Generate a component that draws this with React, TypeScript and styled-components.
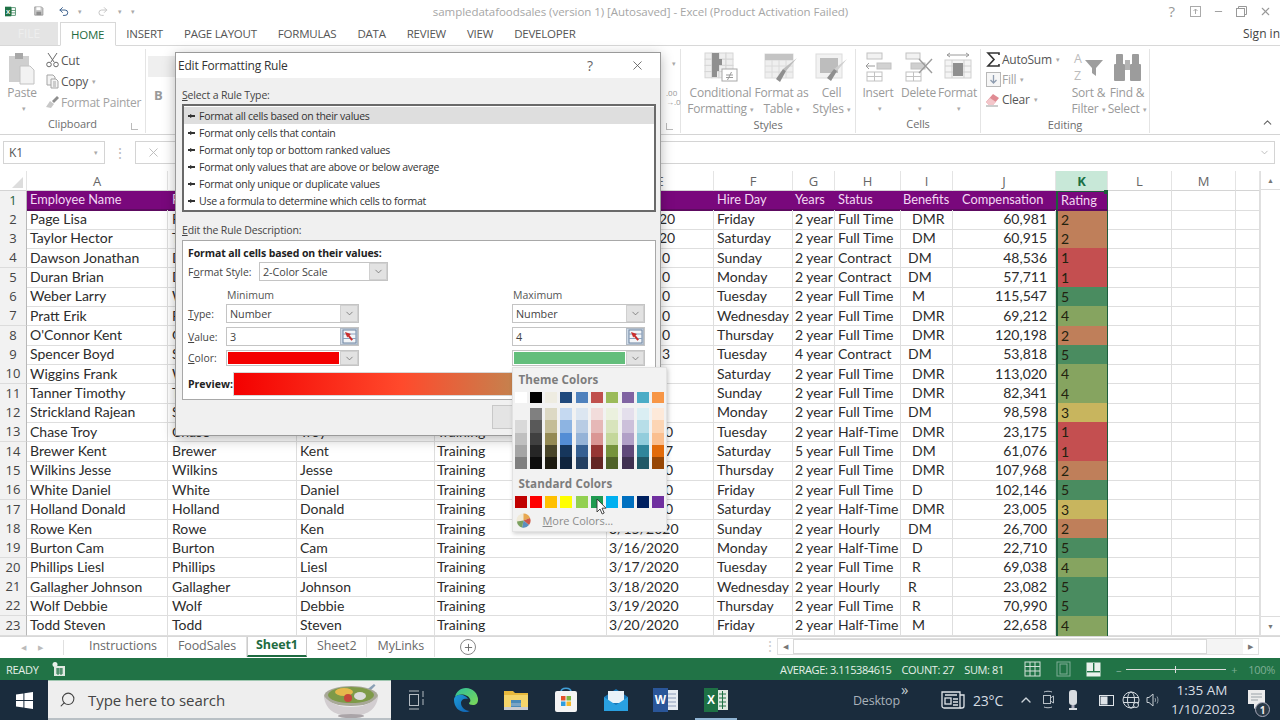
import React from "react";
import styled, { createGlobalStyle } from "styled-components";
import { Undo2, Redo2, ChevronUp, ChevronDown, Search, Plus, Minus, X } from "lucide-react";

const UI = `"Open Sans", "Noto Sans", "Liberation Sans", sans-serif`;
const CELL = `Lato, "Open Sans", "Liberation Sans", sans-serif`;

const Global = createGlobalStyle`
  html, body { margin: 0; padding: 0; background: #fff; }
  #root { width: 1280px; height: 720px; overflow: hidden; }
  * { box-sizing: border-box; }
`;

const Page = styled.div`
  position: relative; width: 1280px; height: 720px; display: flex; flex-direction: column;
  overflow: hidden; font-family: ${UI}; color: #444; background: #fff;
`;
const Spacer = styled.span<{ $w: number }>`
  width: ${p => p.$w}px; flex: none;
`;

/* ---------- title bar ---------- */
const TitleBar = styled.div`
  height: 22px; display: flex; align-items: center; padding: 0 0 0 5px; position: relative; flex: none;
`;
const Quick = styled.div`
  display: flex; align-items: center; gap: 6px; width: 130px; color: #777;
`;
const TitleText = styled.div`
  flex: 1; text-align: center; font-size: 11.5px; color: #a6a6a6; padding-right: 14px; white-space: nowrap;
  letter-spacing: -0.05px;
`;
const WinCtrls = styled.div`
  display: flex; align-items: center; width: 120px; color: #999; font-size: 15px; justify-content: flex-end; padding-right: 3px;
`;
const WinBtn = styled.span`
  width: 25px; display: flex; justify-content: center; align-items: center; height: 20px;
`;

/* ---------- tabs ---------- */
const Tabs = styled.div`
  height: 23px; display: flex; align-items: stretch; flex: none; position: relative;
`;
const FileTab = styled.div`
  width: 58px; background: #e4e4e4; color: #eeeeee; font-size: 12px; display: flex; align-items: center; justify-content: center;
`;
const TabItem = styled.div<{ $active?: boolean }>`
  padding: 0 10.5px; font-size: 11.5px; display: flex; align-items: center; white-space: nowrap;
  color: ${p => (p.$active ? "#1e6b41" : "#555")};
  margin-left: ${p => (p.$active ? "1.5px" : "0")};
  letter-spacing: -0.22px;
  ${p => p.$active && "border: 1px solid #d8d8d8; border-bottom: 1px solid #fff; height: 24px; background: #fff; z-index: 1;"}
`;
const SignIn = styled.div`
  margin-left: auto; font-size: 12px; color: #444; display: flex; align-items: center; width: 37px; white-space: nowrap; overflow: hidden;
`;

/* ---------- ribbon ---------- */
const Ribbon = styled.div`
  height: 90px; display: flex; flex: none; border-top: 1px solid #d8d8d8; border-bottom: 1px solid #d4d4d4; background: #fff; position: relative;
`;
const Group = styled.div<{ $w: number; $sep?: boolean }>`
  width: ${p => p.$w}px; display: flex; flex-direction: column; flex: none;
  border-right: ${p => (p.$sep ? "1px solid #e4e4e4" : "0")}; margin: 3px 0 1px; position: relative;
`;
const GroupBody = styled.div<{ $pad?: number }>`
  flex: 1; display: flex; padding-left: ${p => p.$pad ?? 0}px;
`;
const GroupLabel = styled.div`
  height: 16px; font-size: 11px; line-height: 14px; text-align: center; color: #6e6e6e; letter-spacing: -0.1px;
`;
const Launcher = styled.span`
  position: absolute; right: 7px; bottom: 3px; width: 7px; height: 7px; border-left: 1px solid #bbb; border-bottom: 1px solid #bbb;
`;
const BigBtn = styled.div<{ $w: number }>`
  width: ${p => p.$w}px; display: flex; flex-direction: column; align-items: center; flex: none; color: #9a9a9a;
  font-size: 12px; line-height: 16px; white-space: nowrap; letter-spacing: -0.2px;
`;
const BigIcon = styled.div`
  height: 36px; display: flex; align-items: flex-start; justify-content: center; padding-top: 3px;
`;
const Caret = styled.span`
  font-size: 7px; color: #aaa; margin-left: 3px; vertical-align: 1px;
`;
const SmallList = styled.div<{ $w: number; $top: number; $gap: number }>`
  width: ${p => p.$w}px; display: flex; flex-direction: column; gap: ${p => p.$gap}px; padding-top: ${p => p.$top}px; flex: none;
`;
const SmallRow = styled.div<{ $dim?: boolean }>`
  height: 20px; display: flex; align-items: center; gap: 1px; font-size: 12px; white-space: nowrap; letter-spacing: -0.25px;
  color: ${p => (p.$dim ? "#a2a2a2" : "#555")};
`;
const SmallIcon = styled.span`
  width: 16px; display: flex; justify-content: center; flex: none;
`;
const FontBlock = styled.div`
  display: flex; flex-direction: column; padding: 7px 0 0 2px;
`;
const FakeFont = styled.div`
  width: 28px; height: 21px; background: #efefef;
`;
const BoldB = styled.div`
  font-weight: 700; font-size: 13px; color: #999; margin: 9px 0 0 6px;
`;
const DecHint = styled.div`
  position: absolute; right: 0; top: 39px; color: #999; font-size: 8px; line-height: 9px; width: 14px;
`;
const FontCaret = styled.span`
  position: absolute; right: 4px; top: 10px; font-size: 7px; color: #aaa;
`;
const Collapse = styled.div`
  flex: 1; position: relative; color: #777;
`;
const CollapseIcon = styled.span`
  position: absolute; right: 6px; bottom: 0;
`;

/* ---------- formula bar ---------- */
const FormulaBar = styled.div`
  height: 36px; flex: none; display: flex; align-items: center; padding: 0 5px 1px 3px; background: #fff;
`;
const NameBox = styled.div`
  width: 102px; height: 23px; border: 1px solid #d4d4d4; display: flex; align-items: center; justify-content: space-between; padding: 0 6px 0 5px;
  font-size: 12px; color: #555; background: #fff;
`;
const Dots = styled.span`
  width: 30px; text-align: center; color: #bbb; font-size: 14px; line-height: 1;
`;
const FxInput = styled.div`
  flex: 1; height: 23px; border: 1px solid #d4d4d4; display: flex; align-items: center; justify-content: space-between; padding: 0 4px 0 10px; color: #999;
`;

/* ---------- sheet ---------- */
const SheetWrap = styled.div`
  display: flex; flex: none; height: 465px;
`;
const SheetGrid = styled.div`
  width: 1260px; display: flex; flex-direction: column; overflow: hidden;
`;
const cols = "27px 141px 129px 138px 172px 107px 79px 42px 66px 52px 103px 52px 64px 64px 24px";
const Row = styled.div<{ $h: number }>`
  display: grid; grid-template-columns: ${cols}; height: ${p => p.$h}px; flex: none;
  font-family: ${CELL}; font-size: 14px;
`;
const ColHead = styled.div<{ $sel?: boolean }>`
  display: flex; align-items: center; justify-content: center; font-size: 13px; font-family: ${UI}; padding-top: 1px;
  color: ${p => (p.$sel ? "#1b7045" : "#666")}; font-weight: ${p => (p.$sel ? 700 : 400)};
  background: ${p => (p.$sel ? "#c8e8d8" : "#fff")};
  border-right: 1px solid #e4e4e4; border-bottom: 1px solid #d4d4d4;
`;
const Corner = styled.div`
  background: #fff; border-right: 1px solid #e4e4e4; border-bottom: 1px solid #d4d4d4; position: relative;
  &::after { content: ""; position: absolute; right: 3px; bottom: 2px; border-style: solid; border-width: 0 0 11px 11px; border-color: transparent transparent #ddd transparent; }
`;
const RowNum = styled.div<{ $first?: boolean }>`
  display: flex; align-items: center; justify-content: center; background: #f2f2f2; font-size: 13px; font-weight: 400; font-family: ${UI};
  color: ${p => (p.$first ? "#1f6140" : "#444")}; border-right: 1px solid #b8b8b8; border-bottom: 1px solid #dcdcdc; padding-bottom: 1px;
`;
const Cell = styled.div<{ $pad?: number; $right?: boolean }>`
  display: flex; align-items: center; overflow: hidden; white-space: nowrap; color: #2c2c2c; padding-bottom: 1px;
  padding-left: ${p => p.$pad ?? 3}px; padding-right: ${p => (p.$right ? 8 : 0)}px; justify-content: ${p => (p.$right ? "flex-end" : "flex-start")};
  border-right: 1px solid #dedede; border-bottom: 1px solid #dedede;
`;
const HeadCell = styled.div<{ $pad?: number }>`
  display: flex; align-items: center; white-space: nowrap; overflow: hidden; background: #79087c; color: #f3d9f3; padding: 0 0 1px ${p => p.$pad ?? 3}px;
  border-bottom: 2px solid #5d0a60; font-size: 12.8px;
`;
const RateCell = styled.div<{ $c: string }>`
  display: flex; align-items: center; padding: 0 0 1px 3px; background: ${p => p.$c}; color: #22220f;
  border-left: 2px solid #1d5f3c; border-right: 1px solid #1d5f3c;
`;
const RateHead = styled(HeadCell)`
  border-left: 2px solid #1d5f3c; border-right: 1px solid #1d5f3c; border-top: 1px solid #1d5f3c; position: relative; overflow: visible;
  &::after { content: ""; position: absolute; top: -2px; right: -1px; width: 4px; height: 4px; background: #1d5f3c; }
`;
const VScroll = styled.div`
  width: 20px; flex: none; display: flex; flex-direction: column; background: #fff; border-left: 1px solid #e0e0e0; color: #777; align-items: center;
`;
const VArrow = styled.div`
  height: 19px; width: 100%; border-bottom: 1px solid #ddd; display: flex; align-items: center; justify-content: center; font-size: 7px; color: #777;
`;
const VThumb = styled.div`
  flex: 1; width: 100%; border-bottom: 1px solid #ddd;
`;

/* ---------- sheet tabs ---------- */
const SheetBar = styled.div`
  height: 22px; flex: none; display: flex; align-items: stretch; border-top: 1px solid #d8d8d8; background: #fff; font-size: 12px; color: #666;
`;
const NavArrows = styled.div`
  width: 64px; display: flex; align-items: center; justify-content: center; gap: 12px; font-size: 7px; color: #bbb; border-right: 1px solid #e0e0e0; margin: 3px 15px 3px 0;
`;
const SheetTab = styled.div<{ $active?: boolean }>`
  padding: 0 ${p => (p.$active ? "8px" : "10px")} 4px; display: flex; align-items: center; white-space: nowrap; letter-spacing: -0.1px;
  font-size: 12.5px; height: 20px;
  color: ${p => (p.$active ? "#1e6b41" : "#6a6a6a")}; font-weight: ${p => (p.$active ? 700 : 400)};
  border-right: ${p => (p.$active ? "0" : "1px solid #e0e0e0")};
  ${p => p.$active && "border-bottom: 2px solid #1e6b41; border-left: 1px solid #ccc; border-right: 1px solid #ccc;"}
`;
const AddSheet = styled.div`
  width: 16px; height: 16px; margin: 2px 0 0 25px; border: 1px solid #888; border-radius: 50%; display: flex; align-items: center; justify-content: center; color: #666;
`;
const SplitDots = styled.div`
  margin-left: 287px; width: 14px; color: #ccc; display: flex; align-items: center; font-size: 14px; justify-content: center; padding-bottom: 4px;
`;
const HScroll = styled.div`
  width: 482px; display: flex; margin-top: 1px; height: 17px; border: 1px solid #e0e0e0; background: #f4f4f4;
`;
const HArrow = styled.div`
  width: 15px; display: flex; align-items: center; justify-content: center; font-size: 7px; color: #777; background: #fff;
`;
const HThumb = styled.div`
  width: 414px; background: #fff; border: 1px solid #d8d8d8;
`;
const HRest = styled.span`
  flex: 1;
`;

/* ---------- status bar ---------- */
const StatusBar = styled.div`
  height: 22px; flex: none; background: #217346; display: flex; align-items: center; color: #e6efe9; font-size: 11px; padding-left: 6px; letter-spacing: -0.28px;
`;
const StatusCalc = styled.span`
  margin-left: 13px; display: flex;
`;
const StatusRight = styled.div`
  margin-left: auto; display: flex; align-items: center; gap: 11px; padding-right: 5px;
`;
const StatusStats = styled.div`
  display: flex; gap: 10px; letter-spacing: -0.38px; white-space: nowrap;
`;
const ViewIcons = styled.div`
  display: flex; gap: 15px; margin: 0 4px 0 9px; align-items: center;
`;
const ZoomTrack = styled.div`
  width: 100px; height: 1px; background: #dcdcdc; position: relative;
  &::after { content: ""; position: absolute; left: 49px; top: -3px; width: 1px; height: 7px; background: #dcdcdc; }
`;
const DimText = styled.span<{ $ml?: number; $mr?: number }>`
  color: #7fae95; margin-left: ${p => p.$ml ?? 0}px; margin-right: ${p => p.$mr ?? 0}px;
`;

/* ---------- taskbar ---------- */
const Taskbar = styled.div`
  height: 40px; flex: none; background: #1a2c3d; display: flex; align-items: center; position: relative; color: #d7dde2;
`;
const WinSlot = styled.div`
  width: 48px; display: flex; justify-content: center; align-items: center;
`;
const SearchBox = styled.div`
  width: 343px; height: 40px; background: #eeeeee; border-bottom: 2px solid #b9c0c5; border-top: 1px solid #9fc7b0; display: flex; align-items: center; color: #444; font-size: 15px; padding-left: 11px;
`;
const SearchFlip = styled.span`
  display: flex; transform: scaleX(-1);
`;
const SearchLabel = styled.span`
  margin-left: 12px; letter-spacing: -0.05px;
`;
const BowlSlot = styled.span`
  margin-left: auto; margin-right: 11px; display: flex;
`;
const TaskIcon = styled.div<{ $w?: number; $active?: boolean }>`
  width: ${p => p.$w ?? 50}px; height: 40px; display: flex; align-items: center; justify-content: center; position: relative;
  ${p => p.$active && `&::after { content: ""; position: absolute; bottom: 0; left: 4px; right: 4px; height: 2px; background: #8fb4d3; }`}
`;
const Desktop = styled.div`
  margin-left: 112px; width: 44px; font-size: 12.5px; color: #a9b2ba; text-align: center; letter-spacing: -0.2px;
`;
const Chevrons = styled.span`
  width: 44px; padding-left: 4px; font-size: 15px; color: #c5ccd2; margin-top: -22px;
`;
const Temp = styled.span`
  font-size: 14px; margin-left: 8px; color: #d7dde2; letter-spacing: -0.2px; white-space: nowrap;
`;
const TrayItem = styled.span<{ $ml: number }>`
  display: flex; margin-left: ${p => p.$ml}px;
`;
const Clock = styled.div`
  width: 62px; margin-left: 11px; text-align: center; font-size: 13.5px; line-height: 19px; color: #d7dde2; white-space: nowrap;
`;
const Notify = styled.div`
  margin-left: 7px; position: relative; width: 34px; display: flex; justify-content: center;
`;
const NotifyBadge = styled.span`
  position: absolute; right: 4px; bottom: -6px; width: 15px; height: 15px; border-radius: 50%; background: #2a3a48; border: 1px solid #aab; color: #eee; font-size: 10px; display: flex; align-items: center; justify-content: center; font-weight: 700;
`;

/* ---------- dialog ---------- */
const Dialog = styled.div`
  position: absolute; left: 175px; top: 52px; width: 486px; height: 384px; background: #f0f0f0; border: 1px solid #9a9a9a;
  box-shadow: 0 3px 12px rgba(0,0,0,.28); color: #333; font-size: 11px; display: flex; flex-direction: column;
`;
const DlgTitle = styled.div`
  height: 25px; background: #fff; display: flex; align-items: center; padding: 0 0 0 2px; font-size: 12px; flex: none; color: #333; letter-spacing: -0.2px;
`;
const DlgHelp = styled.span`
  margin-left: auto; width: 30px; text-align: center; color: #666; font-size: 14px;
`;
const DlgClose = styled.span`
  width: 46px; margin-left: 9px; display: flex; justify-content: center; color: #555;
`;
const DlgBody = styled.div`
  padding: 10px 6px 0; flex: 1; display: flex; flex-direction: column;
`;
const SectionLabel = styled.div<{ $top?: number }>`
  font-size: 10.5px; height: 15px; line-height: 15px; color: #444; margin-top: ${p => p.$top ?? 0}px; letter-spacing: -0.15px; font-kerning: none;
`;
const RuleList = styled.div`
  margin-top: 1px; height: 108px; border: 2px solid #6a6a6a; background: #fff; display: flex; flex-direction: column; padding: 1px 0; width: 474px;
`;
const RuleItem = styled.div<{ $sel?: boolean }>`
  height: 17.3px; display: flex; align-items: center; padding-left: 4px; font-size: 10.5px; gap: 2px; background: ${p => (p.$sel ? "#dedede" : "transparent")}; letter-spacing: -0.26px; color: #333; white-space: nowrap;
`;
const RuleMark = styled.span`
  width: 7px; height: 0; border-top: 2px solid #333; position: relative; margin-right: 2px;
  &::after { content: ""; position: absolute; left: 2px; top: -3px; border-style: solid; border-width: 2px 0 2px 4px; border-color: transparent transparent transparent #333; }
`;
const DescPanel = styled.div`
  margin-top: 2px; width: 474px; height: 160px; background: #fff; border: 1px solid #a8a8a8; padding: 5px 5px; position: relative;
`;
const DescHead = styled.div`
  font-weight: 700; font-size: 10.5px; line-height: 15px; color: #222; letter-spacing: -0.1px; white-space: nowrap;
`;
const StyleRow = styled.div`
  display: flex; align-items: center; margin-top: 1px;
`;
const FieldLabel = styled.span<{ $w: number }>`
  width: ${p => p.$w}px; flex: none; font-size: 10.4px; color: #444; white-space: nowrap; font-kerning: none;
`;
const Select = styled.div<{ $w: number; $h?: number }>`
  width: ${p => p.$w}px; height: ${p => p.$h ?? 19}px; border: 1px solid #c4c4c4; background: #fff; display: flex; align-items: stretch; font-size: 10.8px; color: #444;
`;
const SelectText = styled.span`
  flex: 1; display: flex; align-items: center; padding-left: 3px; letter-spacing: -0.05px;
`;
const SelectArrow = styled.span`
  width: 18px; flex: none; background: #e2e2e2; border: 1px solid #d0d0d0; display: flex; align-items: center; justify-content: center; color: #555;
`;
const RuleGrid = styled.div`
  display: grid; grid-template-columns: 38px 133px 153px 133px; grid-template-rows: 12px 19px 19px 16px; row-gap: 4px; margin-top: 7px; align-items: center;
`;
const ColTitle = styled.span<{ $col: number }>`
  grid-column: ${p => p.$col}; font-size: 10.5px; color: #555; padding: 2px 0 0 1px;
`;
const Swatch = styled.span<{ $c: string }>`
  flex: 1; background: ${p => p.$c}; margin: 1px;
`;
const RefBtn = styled.span`
  width: 18px; flex: none; background: #cfdbe8; border: 1px solid #b0bac6; display: flex; align-items: center; justify-content: center;
`;
const PreviewRow = styled.div`
  display: flex; align-items: center; position: absolute; left: 5px; top: 131px; width: 467px;
`;
const PreviewLabel = styled.span`
  font-weight: 700; font-size: 10.5px; width: 45px; color: #222; flex: none;
`;
const PreviewBar = styled.div`
  height: 24px; flex: 1; border: 1px solid #d8d8d8; background: linear-gradient(to right, #f40000, #ff4a2c 40%, #b98d55 72%, #63be7b);
`;
const DlgFooter = styled.div`
  display: flex; gap: 8px; margin: 5px 0 0 310px;
`;
const DlgButton = styled.div`
  width: 78px; height: 24px; background: #e4e4e4; border: 1px solid #c8c8c8; font-size: 11px; display: flex; align-items: center; justify-content: center;
`;

/* ---------- colour popup ---------- */
const Popup = styled.div`
  position: absolute; left: 512px; top: 367px; width: 155px; height: 165px; background: #f2f2f2; border: 1px solid #e2e2e2;
  box-shadow: 1px 2px 4px rgba(0,0,0,.18); padding: 4px 2px 0 1.5px; display: flex; flex-direction: column;
`;
const PopTitle = styled.div<{ $top?: number }>`
  font-weight: 700; font-size: 11.6px; color: #7d7d7d; height: 16px; line-height: 16px; padding-left: 4px; margin-top: ${p => p.$top ?? 0}px; letter-spacing: 0.1px;
`;
const SwatchRow = styled.div<{ $top: number }>`
  display: grid; grid-template-columns: repeat(10, 12px); column-gap: 3.33px; margin-top: ${p => p.$top}px;
`;
const Chip = styled.span<{ $c: string; $h: number }>`
  display: block; height: ${p => p.$h}px; background: ${p => p.$c};
`;
const ShadeCol = styled.div`
  display: flex; flex-direction: column;
`;
const MoreRow = styled.div`
  display: flex; align-items: center; margin-top: 5px; font-size: 11px; color: #8c8c8c; padding-left: 1px; letter-spacing: -0.05px; font-kerning: none;
`;
const MoreText = styled.span`
  margin-left: 12px;
`;
const Pointer = styled.div`
  position: absolute; left: 596px; top: 498px; width: 12px; height: 18px; line-height: 0;
`;

/* ---------- icons ---------- */
const XlLogo = () => (
  <svg width="16" height="15" viewBox="0 0 16 15">
    <rect x="4" y="2" width="11" height="11" fill="#fff" stroke="#217346" />
    <path d="M9 2v11M4 6h11M4 9.5h11" stroke="#217346" strokeWidth="1" />
    <rect x="0" y="0.5" width="9" height="14" fill="#1e7145" />
    <text x="4.5" y="11" fontSize="9" fill="#fff" textAnchor="middle" fontFamily="Liberation Sans" fontWeight="700">X</text>
  </svg>
);
const Floppy = () => (
  <svg width="14" height="14" viewBox="0 0 14 14">
    <path d="M1 1h10l2 2v10H1z" fill="#c9c9c9" stroke="#8a8a8a" />
    <rect x="3.5" y="1.5" width="6" height="4" fill="#fff" />
    <rect x="3.5" y="8" width="7" height="5" fill="#8e8e8e" />
  </svg>
);
const PasteIcon = () => (
  <svg width="28" height="34" viewBox="0 0 28 34">
    <rect x="1" y="4" width="20" height="26" fill="#cfcfcf" />
    <rect x="7" y="1" width="8" height="6" fill="#a8a8a8" />
    <path d="M12 14h10l4 4v14H12z" fill="#f2f2f2" stroke="#c2c2c2" />
  </svg>
);
const Scissors = () => (
  <svg width="15" height="16" viewBox="0 0 15 16" fill="none" stroke="#6a6a6a">
    <path d="M3 1l6 9M12 1l-6 9" />
    <circle cx="4" cy="12.5" r="2.3" /><circle cx="11" cy="12.5" r="2.3" />
  </svg>
);
const CopyIcon = () => (
  <svg width="15" height="15" viewBox="0 0 15 15" fill="#f4f4f4" stroke="#a5a5a5">
    <path d="M2 1h6l2 2v8H2z" /><path d="M6 5h5l2 2v7H6z" />
    <path d="M8 8h3M8 10h3M8 12h3" />
  </svg>
);
const Painter = () => (
  <svg width="15" height="14" viewBox="0 0 15 14">
    <path d="M1 12l4-6 4 3-3 4z" fill="#c8c8c8" />
    <path d="M7 6l5-5 2 2-5 5z" fill="#8e8e8e" />
  </svg>
);
const CondIcon = () => (
  <svg width="34" height="30" viewBox="0 0 34 30">
    <g fill="#efefef" stroke="#d6d6d6">
      {[0, 1, 2, 3].map(r => [0, 1, 2, 3].map(c => <rect key={`${r}${c}`} x={1 + c * 7} y={1 + r * 6.2} width="7" height="6.2" />))}
    </g>
    <path d="M8 1h7v6h3v6h-3v6h-2v6H8z" fill="#8f8f8f" />
    <rect x="18" y="17" width="15" height="12" fill="#fff" stroke="#a8a8a8" />
    <path d="M22 23h7M22 25.5h7M27.5 20l-4 8" stroke="#9a9a9a" fill="none" />
  </svg>
);
const TableIcon = () => (
  <svg width="36" height="32" viewBox="0 0 36 32">
    <rect x="1" y="2" width="28" height="24" fill="#efefef" stroke="#dcdcdc" />
    <path d="M1 8h28M1 14h28M1 20h28M8 2v24M15 2v24M22 2v24" stroke="#dadada" />
    <rect x="1" y="2" width="28" height="6" fill="#c4c4c4" />
    <path d="M33 6L22 19l-3 -2z" fill="#bcbcbc" />
    <path d="M22 19l-6 11-4 -3 7-10z" fill="#8f8f8f" />
  </svg>
);
const CellStyleIcon = () => (
  <svg width="34" height="32" viewBox="0 0 34 32">
    <rect x="1" y="2" width="26" height="24" fill="#f2f2f2" stroke="#dcdcdc" />
    <rect x="5" y="6" width="18" height="15" fill="#bdbdbd" />
    <path d="M32 7L22 19l-3 -2z" fill="#cfcfcf" />
    <path d="M22 19l-6 10-4 -3 7-9z" fill="#8f8f8f" />
  </svg>
);
const InsertIcon = () => (
  <svg width="28" height="30" viewBox="0 0 28 30" fill="none" stroke="#c2c2c2">
    <rect x="3" y="1" width="15" height="6" fill="#f2f2f2" />
    <rect x="3" y="20" width="15" height="9" /><path d="M10.5 20v9M3 24.5h15" />
    <rect x="13" y="11" width="14" height="6" fill="#d2d2d2" />
    <path d="M11 14H2M5 11l-3 3 3 3" stroke="#9a9a9a" />
  </svg>
);
const DeleteIcon = () => (
  <svg width="28" height="30" viewBox="0 0 28 30" fill="none" stroke="#c2c2c2">
    <rect x="1" y="1" width="14" height="6" fill="#f2f2f2" />
    <rect x="1" y="20" width="15" height="9" /><path d="M8.5 20v9M1 24.5h15" />
    <rect x="6" y="11" width="14" height="6" fill="#cfcfcf" />
    <path d="M14 7l13 14M27 7L14 21" stroke="#9c9c9c" strokeWidth="1.4" />
  </svg>
);
const FormatIcon = () => (
  <svg width="30" height="32" viewBox="0 0 30 32" fill="none" stroke="#d0d0d0">
    <path d="M4 3h22M4 3l3-2M4 3l3 2M26 3l-3-2M26 3l-3 2" stroke="#9a9a9a" />
    <rect x="2" y="8" width="26" height="18" fill="#f4f4f4" />
    <path d="M9 8v18M21 8v18M2 14h26M2 20h26" />
    <rect x="10" y="11" width="10" height="13" fill="#8f8f8f" stroke="none" />
  </svg>
);
const SortIcon = () => (
  <svg width="32" height="30" viewBox="0 0 32 30" overflow="visible">
    <text x="1" y="11" fontSize="12.5" fill="#bcbcbc" fontFamily="Open Sans">A</text>
    <text x="1" y="28" fontSize="12.5" fill="#bcbcbc" fontFamily="Open Sans">Z</text>
    <path d="M12 8h18l-7 8v8l-4 -3v-5z" fill="#9e9e9e" />
  </svg>
);
const Binoc = () => (
  <svg width="31" height="30" viewBox="0 0 31 30" fill="#9c9c9c">
    <rect x="2" y="12" width="11" height="17" rx="1" />
    <rect x="18" y="12" width="11" height="17" rx="1" />
    <rect x="4" y="2" width="7" height="11" rx="1" />
    <rect x="20" y="2" width="7" height="11" rx="1" />
    <rect x="13" y="8" width="5" height="10" fill="#b4b4b4" />
  </svg>
);
const FillIcon = () => (
  <svg width="15" height="15" viewBox="0 0 15 15" fill="none">
    <rect x="0.5" y="0.5" width="14" height="14" stroke="#b8b8b8" fill="#f6f6f6" />
    <path d="M7.5 3v8M4.5 8l3 3 3-3" stroke="#8f9db0" strokeWidth="1.3" />
  </svg>
);
const Eraser = () => (
  <svg width="16" height="15" viewBox="0 0 16 15">
    <path d="M1 10l7-8 6 4-6 7H4z" fill="#e08b93" />
    <path d="M5 6l6 4-3 3H4l-3-3z" fill="#f3c6ca" />
    <path d="M1 14h12" stroke="#999" />
  </svg>
);
const WinLogo = () => (
  <svg width="17" height="17" viewBox="0 0 17 17" fill="#fff">
    <path d="M0 2.5l7.4-1v6.6H0zM8.4 1.3L17 0v8.1H8.4zM0 9h7.4v6.6L0 14.6zM8.4 9H17v8l-8.6-1.2z" />
  </svg>
);
const Bowl = () => (
  <svg width="56" height="36" viewBox="0 0 56 36">
    <path d="M35 14L50 2l1.5 1.5L39 16z" fill="#8aa0b5" />
    <ellipse cx="27" cy="14" rx="27" ry="10" fill="#a8a898" />
    <ellipse cx="27" cy="13" rx="23" ry="8" fill="#7e9a48" />
    <ellipse cx="20" cy="10" rx="9" ry="4" fill="#e5b84c" />
    <circle cx="24" cy="16" r="4" fill="#c6463a" />
    <ellipse cx="36" cy="14" rx="6" ry="4" fill="#dcdcdc" />
    <path d="M0 14c1 14 12 20 27 20s26-6 27-20c-6 8-17 11-27 11S6 22 0 14z" fill="#d2cdd0" />
    <ellipse cx="27" cy="34" rx="13" ry="2" fill="#aaa4a8" />
  </svg>
);
const TaskView = () => (
  <svg width="15" height="20" viewBox="0 0 15 20" fill="none" stroke="#b4bcc3">
    <path d="M0 1h10M0 19h10" /><rect x="0.5" y="4.5" width="9" height="11" /><path d="M14 1v6M14 9v6" />
  </svg>
);
const EdgeIcon = () => (
  <svg width="26" height="26" viewBox="0 0 26 26">
    <defs>
      <linearGradient id="eg" x1="0" y1="0" x2="1" y2="1"><stop offset="0" stopColor="#1d9bd8" /><stop offset="1" stopColor="#1060b0" /></linearGradient>
      <linearGradient id="eg2" x1="0" y1="0" x2="1" y2="1"><stop offset="0" stopColor="#2dbf9a" /><stop offset="1" stopColor="#7ed957" /></linearGradient>
    </defs>
    <path d="M13 1a12 12 0 0 1 12 12c0 3-2 5-5 5-3 0-4-1-4-2 1-1 2-2 1-4C15 7 6 6 2 10 3 5 7 1 13 1z" fill="url(#eg2)" />
    <path d="M2 10c4-4 11-2 13 2-3-1-7 0-7 4 0 4 4 8 9 8-2 1-3 1-5 1C6 25 1 20 1 13c0-1 0-2 1-3z" fill="url(#eg)" />
  </svg>
);
const FolderIcon = () => (
  <svg width="26" height="22" viewBox="0 0 26 22">
    <path d="M1 2h9l2 2h13v4H1z" fill="#e8b93c" />
    <rect x="1" y="6" width="24" height="15" fill="#f5d56a" />
    <rect x="8" y="11" width="10" height="7" fill="#4a8ab8" />
    <rect x="8" y="14" width="10" height="3" fill="#7aa5c5" />
    <rect x="1" y="18" width="24" height="3" fill="#c9ccd0" />
  </svg>
);
const StoreIcon = () => (
  <svg width="24" height="26" viewBox="0 0 24 26">
    <path d="M7 5c0-5 10-5 10 0" fill="none" stroke="#41a0d8" strokeWidth="1.6" />
    <rect x="1" y="4" width="22" height="21" rx="2" fill="#f4f4f4" />
    <rect x="7" y="9" width="4.5" height="4.5" fill="#e2512a" />
    <rect x="12.5" y="9" width="4.5" height="4.5" fill="#7db742" />
    <rect x="7" y="14.5" width="4.5" height="4.5" fill="#2f9de0" />
    <rect x="12.5" y="14.5" width="4.5" height="4.5" fill="#f5b82b" />
  </svg>
);
const MailIcon = () => (
  <svg width="26" height="24" viewBox="0 0 26 24">
    <path d="M1 9L13 1l12 8v14H1z" fill="#1a78b8" />
    <rect x="5" y="3" width="16" height="12" fill="#e8f2f8" />
    <path d="M1 9l12 8 12-8v14H1z" fill="#29a0e0" />
  </svg>
);
const WordIcon = () => (
  <svg width="26" height="24" viewBox="0 0 26 24">
    <rect x="11" y="2" width="14" height="20" fill="#e6ecf3" />
    <path d="M15 6h8M15 10h8M15 14h8M15 18h8" stroke="#8a9ab8" />
    <rect x="0" y="0" width="15" height="24" fill="#2a5699" />
    <text x="7.5" y="16" fontSize="12" fill="#fff" textAnchor="middle" fontFamily="Liberation Sans" fontWeight="700">W</text>
  </svg>
);
const ExcelTask = () => (
  <svg width="24" height="24" viewBox="0 0 24 24">
    <rect x="11" y="2" width="13" height="20" fill="#dfe9e2" />
    <path d="M15 6h7M15 10h7M15 14h7M15 18h7M18.5 3v18" stroke="#1e7145" />
    <rect x="0" y="0" width="14" height="24" fill="#1e7145" />
    <text x="7" y="16" fontSize="12" fill="#fff" textAnchor="middle" fontFamily="Liberation Sans" fontWeight="700">X</text>
  </svg>
);
const NewsIcon = () => (
  <svg width="24" height="18" viewBox="0 0 24 18" fill="none" stroke="#dfe4e8" strokeWidth="1.3">
    <path d="M1 1h18v16H3a2 2 0 0 1-2-2z" /><path d="M19 4h4v11a2 2 0 0 1-2 2h-2" />
    <rect x="4" y="7" width="6" height="6" /><path d="M4 4h12M12 8h5M12 11h5M12 14h5" />
  </svg>
);
const CalcIcon = () => (
  <svg width="13" height="14" viewBox="0 0 13 14">
    <circle cx="3" cy="2.5" r="2.5" fill="#e8f0ea" />
    <rect x="2" y="4" width="11" height="10" fill="#dfe9e2" />
    <path d="M4 7h7M4 9h7M4 11h7M6 6v7M9 6v7" stroke="#217346" />
  </svg>
);
const ViewNormal = () => (
  <svg width="17" height="16" viewBox="0 0 17 16" fill="none" stroke="#d3e2d8">
    <rect x="1" y="1" width="15" height="14" /><path d="M6 1v14M11 1v14M1 5.5h15M1 10h15" />
  </svg>
);
const ViewLayout = () => (
  <svg width="15" height="16" viewBox="0 0 15 16" fill="none" stroke="#7fae95">
    <rect x="1" y="1" width="13" height="14" /><rect x="4" y="3" width="7" height="10" />
  </svg>
);
const ViewBreak = () => (
  <svg width="15" height="15" viewBox="0 0 15 15">
    <rect x="0.5" y="0.5" width="14" height="14" fill="#eaf1ec" />
    <rect x="7" y="1" width="1.4" height="8" fill="#217346" /><rect x="1" y="9" width="13" height="1.4" fill="#217346" />
  </svg>
);
const MeetIcon = () => (
  <svg width="13" height="22" viewBox="0 0 13 22" fill="none" stroke="#b8c0c7">
    <rect x="1.5" y="6.5" width="7" height="8" /><path d="M8.5 9l3-2v7l-3-2M2 3c2-1 6-1 8 0M2 18c2 1 6 1 8 0" />
  </svg>
);
const MicIcon = () => (
  <svg width="10" height="22" viewBox="0 0 10 22">
    <rect x="1" y="1" width="8" height="15" rx="3" fill="#d8dce0" /><rect x="3.5" y="16" width="3" height="4" fill="#aab" /><rect x="1" y="19" width="8" height="2" fill="#d8dce0" />
  </svg>
);
const BattIcon = () => (
  <svg width="15" height="11" viewBox="0 0 15 11" fill="none" stroke="#dfe4e8">
    <rect x="0.5" y="0.5" width="14" height="10" /><rect x="1.5" y="1.5" width="7" height="8" fill="#dfe4e8" stroke="none" />
  </svg>
);
const GlobeIcon = () => (
  <svg width="18" height="18" viewBox="0 0 18 18" fill="none" stroke="#d5dbe0">
    <circle cx="9" cy="9" r="8" /><ellipse cx="9" cy="9" rx="3.5" ry="8" /><path d="M1.5 6.5h15M1.5 11.5h15" />
    <circle cx="14" cy="14" r="2.5" fill="#1a2c3d" />
  </svg>
);
const SpeakerIcon = () => (
  <svg width="14" height="16" viewBox="0 0 14 16" fill="none" stroke="#c7ced4">
    <path d="M1 5.5h2L7 2v12L3 10.5H1z" /><path d="M9 6c.7 1 .7 3 0 4M11 4.5c1.3 2 1.3 5 0 7" stroke="#8d98a2" />
  </svg>
);
const BubbleIcon = () => (
  <svg width="20" height="22" viewBox="0 0 20 22">
    <path d="M1 1h17v14h-6l-5 5v-5H1z" fill="#ececec" />
    <path d="M4 5h11M4 8h11M4 11h7" stroke="#9aa2a8" />
  </svg>
);
const RefPick = () => (
  <svg width="15" height="15" viewBox="0 0 15 15">
    <rect x="1" y="1" width="13" height="13" fill="#f2f5f8" stroke="#6d83a0" />
    <path d="M1 5h13M1 9.5h13" stroke="#8ba2bd" strokeWidth="1.2" />
    <path d="M3 3l6 2-1.5 1.2 3.5 4.3-1.6 1.3-3.4-4.3L5.2 8.6z" fill="#c82c2c" />
  </svg>
);
const PieIcon = () => (
  <svg width="15" height="15" viewBox="0 0 15 15">
    <circle cx="7.5" cy="7.5" r="7" fill="#f0ead8" />
    <path d="M7.5 7.5V.5A7 7 0 0 1 14 5z" fill="#e8a850" />
    <path d="M7.5 7.5L14 5a7 7 0 0 1-1 7z" fill="#d0574a" />
    <path d="M7.5 7.5L13 12a7 7 0 0 1-7 2.5z" fill="#5c8fbf" />
    <path d="M7.5 7.5L6 14.5a7 7 0 0 1-5-6z" fill="#7aa060" />
  </svg>
);
const ArrowCursor = () => (
  <svg width="12" height="18" viewBox="0 0 12 18">
    <path d="M1 1v13l3-3 2.2 5 2-1-2.2-4.8H10z" fill="#fff" stroke="#333" strokeWidth="0.9" />
  </svg>
);
const Tiny = ({ c = "#666" }: { c?: string }) => <ChevronDown size={11} color={c} strokeWidth={1.6} />;

/* ---------- data ---------- */
const people: [string, string, string, string, string, string, string, number, string, number][] = [
  ["Page Lisa", "2/28/2020", "Friday", "2 year", "Full Time", "DMR", "60,981", 11, "", 2],
  ["Taylor Hector", "2/29/2020", "Saturday", "2 year", "Full Time", "DM", "60,915", 11, "", 2],
  ["Dawson Jonathan", "3/1/2020", "Sunday", "2 year", "Contract", "DM", "48,536", 7, "", 1],
  ["Duran Brian", "3/2/2020", "Monday", "2 year", "Contract", "DM", "57,711", 7, "", 1],
  ["Weber Larry", "3/3/2020", "Tuesday", "2 year", "Full Time", "M", "115,547", 11, "", 5],
  ["Pratt Erik", "3/4/2020", "Wednesday", "2 year", "Full Time", "DMR", "69,212", 11, "", 4],
  ["O'Connor Kent", "3/5/2020", "Thursday", "2 year", "Full Time", "DMR", "120,198", 11, "", 2],
  ["Spencer Boyd", "3/6/2013", "Tuesday", "4 year", "Contract", "DM", "53,818", 7, "", 5],
  ["Wiggins Frank", "3/7/2020", "Saturday", "2 year", "Full Time", "DMR", "113,020", 11, "", 4],
  ["Tanner Timothy", "3/8/2020", "Sunday", "2 year", "Full Time", "DMR", "82,341", 11, "", 4],
  ["Strickland Rajean", "3/9/2020", "Monday", "2 year", "Full Time", "DM", "98,598", 7, "", 3],
  ["Chase Troy", "3/10/2020", "Tuesday", "2 year", "Half-Time", "DMR", "23,175", 11, "Training", 1],
  ["Brewer Kent", "3/11/2017", "Saturday", "5 year", "Full Time", "DM", "61,076", 11, "Training", 1],
  ["Wilkins Jesse", "3/12/2020", "Thursday", "2 year", "Full Time", "DMR", "107,968", 11, "Training", 2],
  ["White Daniel", "3/13/2020", "Friday", "2 year", "Full Time", "D", "102,146", 11, "Training", 5],
  ["Holland Donald", "3/14/2020", "Saturday", "2 year", "Half-Time", "DMR", "23,005", 11, "Training", 3],
  ["Rowe Ken", "3/15/2020", "Sunday", "2 year", "Hourly", "DM", "26,700", 7, "Training", 2],
  ["Burton Cam", "3/16/2020", "Monday", "2 year", "Half-Time", "D", "22,710", 11, "Training", 5],
  ["Phillips Liesl", "3/17/2020", "Tuesday", "2 year", "Full Time", "R", "69,038", 11, "Training", 4],
  ["Gallagher Johnson", "3/18/2020", "Wednesday", "2 year", "Hourly", "R", "23,082", 7, "Training", 5],
  ["Wolf Debbie", "3/19/2020", "Thursday", "2 year", "Full Time", "R", "70,990", 11, "Training", 5],
  ["Todd Steven", "3/20/2020", "Friday", "2 year", "Half-Time", "M", "22,658", 11, "Training", 4],
];
const rateColor: Record<number, string> = { 1: "#c44f50", 2: "#bf7f5a", 3: "#c8b55e", 4: "#86a460", 5: "#4a8c60" };
const letters = ["A", "", "", "", "E", "F", "G", "H", "I", "J", "K", "L", "M", ""];

/* The part of a hire date that shows past the dialog and the colour menu. */
const visibleDate = (date: string, i: number): [string, number] => {
  if (i < 2) return [date.slice(-2), 52];
  if (i < 8) return [date.slice(-1), 55];
  if (i < 11) return ["", 2];
  if (i < 16) return [date.slice(-1), 58];
  return [date, 2];
};

const themeTop = ["#ffffff", "#000000", "#eeece1", "#1f497d", "#4f81bd", "#c0504d", "#9bbb59", "#8064a2", "#4bacc6", "#f79646"];
const shades = [
  ["#f2f2f2", "#d9d9d9", "#bfbfbf", "#a6a6a6", "#808080"],
  ["#808080", "#595959", "#404040", "#262626", "#0d0d0d"],
  ["#ddd9c4", "#c4bd97", "#948a54", "#494529", "#1d1b10"],
  ["#c5d9f1", "#8db4e2", "#538dd5", "#16365c", "#0f243e"],
  ["#dce6f1", "#b8cce4", "#95b3d7", "#366092", "#244062"],
  ["#f2dcdb", "#e6b8b7", "#da9694", "#963634", "#632523"],
  ["#ebf1de", "#d8e4bc", "#c4d79b", "#76933c", "#4f6228"],
  ["#e4dfec", "#ccc0da", "#b1a0c7", "#60497a", "#403151"],
  ["#daeef3", "#b7dee8", "#92cddc", "#31869b", "#215967"],
  ["#fde9d9", "#fcd5b4", "#fabf8f", "#e26b0a", "#974706"],
];
const standard = ["#c00000", "#ff0000", "#ffc000", "#ffff00", "#92d050", "#1f9a50", "#00b0f0", "#0070c0", "#002060", "#7030a0"];
const rules = [
  "Format all cells based on their values",
  "Format only cells that contain",
  "Format only top or bottom ranked values",
  "Format only values that are above or below average",
  "Format only unique or duplicate values",
  "Use a formula to determine which cells to format",
];
const headers = [
  ["Employee Name", 3], ["F", 4], ["", 3], ["", 2], ["", 2],
  ["Hire Day", 3], ["Years", 2], ["Status", 3], ["Benefits", 2], ["Compensation", 9],
] as [string, number][];

export default function App() {
  return (
    <Page>
      <Global />
      <TitleBar>
        <Quick>
          <XlLogo />
          <Spacer $w={6} />
          <Floppy />
          <Spacer $w={2} />
          <Undo2 size={17} color="#3a5f8c" strokeWidth={2} />
          <Caret>▾</Caret>
          <Spacer $w={3} />
          <Redo2 size={17} color="#c4c4c4" strokeWidth={2} />
          <Caret>▾</Caret>
          <Caret>▾</Caret>
        </Quick>
        <TitleText>sampledatafoodsales (version 1) [Autosaved] - Excel (Product Activation Failed)</TitleText>
        <WinCtrls>
          <WinBtn>?</WinBtn>
          <WinBtn><svg width="11" height="11" viewBox="0 0 11 11" fill="none" stroke="#aaa"><rect x=".5" y=".5" width="10" height="10" /><path d="M5.5 8V3M3.5 5l2-2 2 2" /></svg></WinBtn>
          <WinBtn><Minus size={11} color="#999" /></WinBtn>
          <WinBtn><svg width="11" height="11" viewBox="0 0 11 11" fill="none" stroke="#999"><rect x=".5" y="2.5" width="8" height="8" /><path d="M2.5 2.5v-2h8v8h-2" /></svg></WinBtn>
          <WinBtn><X size={13} color="#999" /></WinBtn>
        </WinCtrls>
      </TitleBar>

      <Tabs>
        <FileTab>FILE</FileTab>
        <TabItem $active>HOME</TabItem>
        {["INSERT", "PAGE LAYOUT", "FORMULAS", "DATA", "REVIEW", "VIEW", "DEVELOPER"].map(t => (
          <TabItem key={t}>{t}</TabItem>
        ))}
        <SignIn>Sign in</SignIn>
      </Tabs>

      <Ribbon>
        <Group $w={146} $sep>
          <GroupBody>
            <BigBtn $w={44}>
              <BigIcon><PasteIcon /></BigIcon>
              <span>Paste</span>
              <Caret>▾</Caret>
            </BigBtn>
            <SmallList $w={100} $top={1} $gap={1}>
              <SmallRow><SmallIcon><Scissors /></SmallIcon>Cut</SmallRow>
              <SmallRow><SmallIcon><CopyIcon /></SmallIcon>Copy<Caret>▾</Caret></SmallRow>
              <SmallRow $dim><SmallIcon><Painter /></SmallIcon>Format Painter</SmallRow>
            </SmallList>
          </GroupBody>
          <GroupLabel>Clipboard</GroupLabel>
          <Launcher />
        </Group>
        <Group $w={535} $sep>
          <GroupBody>
            <FontBlock>
              <FakeFont />
              <BoldB>B</BoldB>
            </FontBlock>
          </GroupBody>
          <GroupLabel />
          <FontCaret>▾</FontCaret>
          <DecHint>.00<br />→.0</DecHint>
          <Launcher />
        </Group>
        <Group $w={175} $sep>
          <GroupBody $pad={4}>
            <BigBtn $w={71}><BigIcon><CondIcon /></BigIcon><span>Conditional</span><span>Formatting<Caret>▾</Caret></span></BigBtn>
            <BigBtn $w={51}><BigIcon><TableIcon /></BigIcon><span>Format as</span><span>Table<Caret>▾</Caret></span></BigBtn>
            <BigBtn $w={49}><BigIcon><CellStyleIcon /></BigIcon><span>Cell</span><span>Styles<Caret>▾</Caret></span></BigBtn>
          </GroupBody>
          <GroupLabel>Styles</GroupLabel>
        </Group>
        <Group $w={125} $sep>
          <GroupBody>
            <BigBtn $w={44}><BigIcon><InsertIcon /></BigIcon><span>Insert</span><Caret>▾</Caret></BigBtn>
            <BigBtn $w={37}><BigIcon><DeleteIcon /></BigIcon><span>Delete</span><Caret>▾</Caret></BigBtn>
            <BigBtn $w={41}><BigIcon><FormatIcon /></BigIcon><span>Format</span><Caret>▾</Caret></BigBtn>
          </GroupBody>
          <GroupLabel>Cells</GroupLabel>
        </Group>
        <Group $w={169} $sep>
          <GroupBody $pad={4}>
            <SmallList $w={85} $top={0} $gap={0}>
              <SmallRow><SmallIcon><svg width="15" height="15" viewBox="0 0 15 15" fill="none" stroke="#333" strokeWidth="1.6"><path d="M13 3V1H2l6 6.5L2 14h11v-2" /></svg></SmallIcon>AutoSum<Caret>▾</Caret></SmallRow>
              <SmallRow $dim><SmallIcon><FillIcon /></SmallIcon>Fill<Caret>▾</Caret></SmallRow>
              <SmallRow><SmallIcon><Eraser /></SmallIcon>Clear<Caret>▾</Caret></SmallRow>
            </SmallList>
            <BigBtn $w={37}><BigIcon><SortIcon /></BigIcon><span>Sort &amp;</span><span>Filter<Caret>▾</Caret></span></BigBtn>
            <BigBtn $w={40}><BigIcon><Binoc /></BigIcon><span>Find &amp;</span><span>Select<Caret>▾</Caret></span></BigBtn>
          </GroupBody>
          <GroupLabel>Editing</GroupLabel>
        </Group>
        <Collapse><CollapseIcon><ChevronUp size={13} color="#666" /></CollapseIcon></Collapse>
      </Ribbon>

      <FormulaBar>
        <NameBox>K1<Caret>▾</Caret></NameBox>
        <Dots>⋮</Dots>
        <FxInput><X size={15} color="#bbb" strokeWidth={1.5} /><Tiny c="#aaa" /></FxInput>
      </FormulaBar>

      <SheetWrap>
        <SheetGrid>
          <Row $h={19.5}>
            <Corner />
            {letters.map((l, i) => <ColHead key={i} $sel={l === "K"}>{l}</ColHead>)}
          </Row>
          <Row $h={19}>
            <RowNum $first>1</RowNum>
            {headers.map(([h, p], i) => <HeadCell key={i} $pad={p}>{h}</HeadCell>)}
            <RateHead>Rating</RateHead>
            <Cell /><Cell /><Cell /><Cell />
          </Row>
          {people.map(([name, date, day, years, status, ben, comp, ind, dept, rate], i) => {
            const [last, first] = name.split(" ");
            const [shown, datePad] = visibleDate(date, i);
            return (
              <Row $h={19.35} key={name}>
                <RowNum>{i + 2}</RowNum>
                <Cell>{name}</Cell>
                <Cell $pad={4}>{dept ? last : last[0]}</Cell>
                <Cell>{dept ? first : ""}</Cell>
                <Cell $pad={2}>{dept}</Cell>
                <Cell $pad={datePad}>{shown}</Cell>
                <Cell>{day}</Cell>
                <Cell $pad={2}>{years}</Cell>
                <Cell $pad={3}>{status}</Cell>
                <Cell $pad={ind}>{ben}</Cell>
                <Cell $right>{comp}</Cell>
                <RateCell $c={rateColor[rate]}>{rate}</RateCell>
                <Cell /><Cell /><Cell /><Cell />
              </Row>
            );
          })}
        </SheetGrid>
        <VScroll>
          <VArrow>▲</VArrow>
          <VThumb />
          <VArrow>▼</VArrow>
        </VScroll>
      </SheetWrap>

      <SheetBar>
        <NavArrows><span>◀</span><span>▶</span></NavArrows>
        <SheetTab>Instructions</SheetTab>
        <SheetTab>FoodSales</SheetTab>
        <SheetTab $active>Sheet1</SheetTab>
        <SheetTab>Sheet2</SheetTab>
        <SheetTab>MyLinks</SheetTab>
        <AddSheet><Plus size={11} color="#666" /></AddSheet>
        <SplitDots>⋮</SplitDots>
        <HScroll>
          <HArrow>◀</HArrow>
          <HThumb />
          <HRest />
          <HArrow>▶</HArrow>
        </HScroll>
      </SheetBar>

      <StatusBar>
        <span>READY</span>
        <StatusCalc><CalcIcon /></StatusCalc>
        <StatusRight>
          <StatusStats>
            <span>AVERAGE: 3.115384615</span>
            <span>COUNT: 27</span>
            <span>SUM: 81</span>
          </StatusStats>
          <ViewIcons><ViewNormal /><ViewLayout /><ViewBreak /></ViewIcons>
          <DimText $mr={-6}>–</DimText>
          <ZoomTrack />
          <DimText $ml={-6}>+</DimText>
          <DimText>100%</DimText>
        </StatusRight>
      </StatusBar>

      <Taskbar>
        <WinSlot><WinLogo /></WinSlot>
        <SearchBox>
          <SearchFlip><Search size={17} color="#444" strokeWidth={1.5} /></SearchFlip>
          <SearchLabel>Type here to search</SearchLabel>
          <BowlSlot><Bowl /></BowlSlot>
        </SearchBox>
        <TaskIcon $w={50}><TaskView /></TaskIcon>
        <TaskIcon><EdgeIcon /></TaskIcon>
        <TaskIcon><FolderIcon /></TaskIcon>
        <TaskIcon><StoreIcon /></TaskIcon>
        <TaskIcon><MailIcon /></TaskIcon>
        <TaskIcon><WordIcon /></TaskIcon>
        <TaskIcon $active><ExcelTask /></TaskIcon>
        <Desktop>Desktop</Desktop>
        <Chevrons>»</Chevrons>
        <NewsIcon />
        <Temp>23°C</Temp>
        <TrayItem $ml={15}><ChevronUp size={16} color="#cdd4da" /></TrayItem>
        <TrayItem $ml={8}><MeetIcon /></TrayItem>
        <TrayItem $ml={13}><MicIcon /></TrayItem>
        <TrayItem $ml={21}><BattIcon /></TrayItem>
        <TrayItem $ml={8}><GlobeIcon /></TrayItem>
        <TrayItem $ml={6}><SpeakerIcon /></TrayItem>
        <Clock>1:35 AM<br />1/10/2023</Clock>
        <Notify><BubbleIcon /><NotifyBadge>1</NotifyBadge></Notify>
      </Taskbar>

      <Dialog>
        <DlgTitle>
          Edit Formatting Rule
          <DlgHelp>?</DlgHelp>
          <DlgClose><X size={15} strokeWidth={1.3} /></DlgClose>
        </DlgTitle>
        <DlgBody>
          <SectionLabel><u>S</u>elect a Rule Type:</SectionLabel>
          <RuleList>
            {rules.map((r, i) => <RuleItem key={r} $sel={i === 0}><RuleMark />{r}</RuleItem>)}
          </RuleList>
          <SectionLabel $top={11}><u>E</u>dit the Rule Description:</SectionLabel>
          <DescPanel>
            <DescHead>Format all cells based on their values:</DescHead>
            <StyleRow>
              <FieldLabel $w={71}>F<u>o</u>rmat Style:</FieldLabel>
              <Select $w={129}><SelectText>2-Color Scale</SelectText><SelectArrow><Tiny /></SelectArrow></Select>
            </StyleRow>
            <RuleGrid>
              <span /><ColTitle $col={2}>Minimum</ColTitle><ColTitle $col={4}>Maximum</ColTitle>
              <FieldLabel $w={38}><u>T</u>ype:</FieldLabel>
              <Select $w={133}><SelectText>Number</SelectText><SelectArrow><Tiny /></SelectArrow></Select>
              <span />
              <Select $w={133}><SelectText>Number</SelectText><SelectArrow><Tiny /></SelectArrow></Select>
              <FieldLabel $w={38}><u>V</u>alue:</FieldLabel>
              <Select $w={133}><SelectText>3</SelectText><RefBtn><RefPick /></RefBtn></Select>
              <span />
              <Select $w={133}><SelectText>4</SelectText><RefBtn><RefPick /></RefBtn></Select>
              <FieldLabel $w={38}><u>C</u>olor:</FieldLabel>
              <Select $w={133} $h={16}><Swatch $c="#f40000" /><SelectArrow><Tiny /></SelectArrow></Select>
              <span />
              <Select $w={133} $h={16}><Swatch $c="#63be7b" /><SelectArrow><Tiny /></SelectArrow></Select>
            </RuleGrid>
            <PreviewRow>
              <PreviewLabel>Preview:</PreviewLabel>
              <PreviewBar />
            </PreviewRow>
          </DescPanel>
          <DlgFooter>
            <DlgButton />
            <DlgButton />
          </DlgFooter>
        </DlgBody>
      </Dialog>

      <Popup>
        <PopTitle>Theme Colors</PopTitle>
        <SwatchRow $top={4}>
          {themeTop.map(c => <Chip key={c} $c={c} $h={11} />)}
        </SwatchRow>
        <SwatchRow $top={5}>
          {shades.map((col, i) => (
            <ShadeCol key={i}>{col.map(c => <Chip key={c} $c={c} $h={12.3} />)}</ShadeCol>
          ))}
        </SwatchRow>
        <PopTitle $top={7}>Standard Colors</PopTitle>
        <SwatchRow $top={4}>
          {standard.map(c => <Chip key={c} $c={c} $h={12} />)}
        </SwatchRow>
        <MoreRow><PieIcon /><MoreText><u>M</u>ore Colors...</MoreText></MoreRow>
      </Popup>
      <Pointer><ArrowCursor /></Pointer>
    </Page>
  );
}
